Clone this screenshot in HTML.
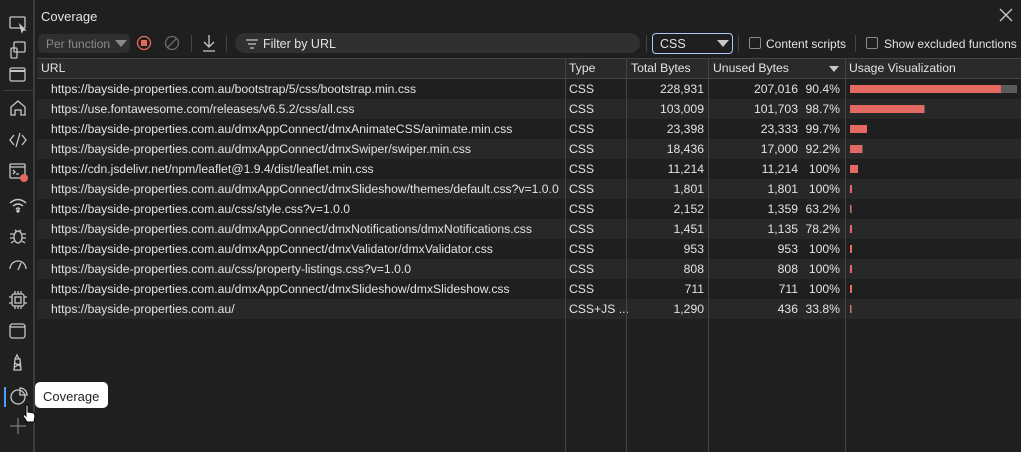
<!DOCTYPE html><html><head><style>
*{box-sizing:border-box;margin:0;padding:0}
body{width:1021px;height:452px;background:#1f1f1f;font-family:"Liberation Sans",sans-serif;font-size:12.2px;color:#e3e3e3;position:relative;overflow:hidden}
.side{position:absolute;left:0;top:0;width:35px;height:452px;background:#202020;border-right:2px solid #3d3d3d}
.side svg{position:absolute;left:8px}
.t{position:absolute;white-space:nowrap}
.grid{position:absolute;left:37px;top:58px;width:984px;bottom:0}
.hdr{height:21px;background:#2a2a2a;border-top:1px solid #444;border-bottom:1px solid #444;position:relative}
.row{height:20px;position:relative}
.c{position:absolute;top:0;height:100%;line-height:20px;white-space:nowrap}
.vl{position:absolute;top:0;bottom:0;width:1px;background:#444}
.bar{position:absolute;top:6px;height:8px;background:#5b5b5b}
.bar i{display:block;height:8px;background:#e46962}
</style></head><body>
<div class="side">
<svg width="20" height="20" style="top:14px" fill="none" stroke="#c7c7c7" stroke-width="1.3"><rect x="2" y="3" width="15" height="11" rx="1"/><path d="M12 11l5 5-2 0 -1 2z" fill="#c7c7c7"/></svg>
<svg width="20" height="20" style="top:40px" fill="none" stroke="#c7c7c7" stroke-width="1.3"><rect x="6" y="2" width="11" height="10" rx="1"/><rect x="3" y="8" width="6" height="10" rx="1"/></svg>
<svg width="20" height="20" style="top:65px" fill="none" stroke="#c7c7c7" stroke-width="1.3"><rect x="2" y="3" width="15" height="13" rx="1.5"/><path d="M2 6h15" stroke-width="2"/></svg>
<div style="position:absolute;left:3px;top:90px;width:30px;height:1px;background:#3d3d3d"></div>
<svg width="20" height="20" style="top:98px" fill="none" stroke="#c7c7c7" stroke-width="1.3"><path d="M3 9l7-6 7 6v8h-4v-5h-6v5h-4z"/></svg>
<svg width="20" height="20" style="top:130px" fill="none" stroke="#c7c7c7" stroke-width="1.3"><path d="M6 5l-4 5 4 5M14 5l4 5-4 5M12 3l-4 14"/></svg>
<svg width="22" height="22" style="top:162px" fill="none" stroke="#c7c7c7" stroke-width="1.3"><rect x="2" y="2" width="15" height="14" rx="1"/><path d="M2 5h15M5 8l2 2-2 2M8 12h3"/><circle cx="16" cy="16" r="4" fill="#e46962" stroke="none"/></svg>
<svg width="20" height="20" style="top:195px" fill="none" stroke="#c7c7c7" stroke-width="1.4"><path d="M2 8q8-7 16 0M5 11q5-4 10 0M8 14q2-2 4 0"/><circle cx="10" cy="16" r="1" fill="#c7c7c7"/></svg>
<svg width="20" height="20" style="top:226px" fill="none" stroke="#c7c7c7" stroke-width="1.3"><ellipse cx="10" cy="11" rx="4" ry="6"/><path d="M7 4l2 2M13 4l-2 2M2 8h4M14 8h4M2 12h4M14 12h4M3 17l3-2M17 17l-3-2"/></svg>
<svg width="20" height="20" style="top:258px" fill="none" stroke="#c7c7c7" stroke-width="1.3"><path d="M2 11a8 8 0 0 1 16 0M10 12l3-7"/></svg>
<svg width="20" height="20" style="top:290px" fill="none" stroke="#c7c7c7" stroke-width="1.3"><rect x="4" y="4" width="12" height="12" rx="2"/><rect x="7" y="7" width="6" height="6"/><path d="M7 1v3M10 1v3M13 1v3M7 16v3M10 16v3M13 16v3M1 7h3M1 13h3M16 7h3M16 13h3"/></svg>
<svg width="20" height="20" style="top:321px" fill="none" stroke="#c7c7c7" stroke-width="1.3"><rect x="2" y="3" width="15" height="14" rx="2.5"/><path d="M2 6h15"/></svg>
<svg width="20" height="20" style="top:352px" fill="none" stroke="#c7c7c7" stroke-width="1.3"><path d="M6 18l1-11h5l1 11zM7 7l2-4 2 4M6.5 11l6 3M7 15l6-4"/></svg>
<div style="position:absolute;left:4px;top:387px;width:2px;height:20px;background:#4a9eff"></div>
<svg width="22" height="22" style="top:386px" fill="none" stroke="#c7c7c7" stroke-width="1.3"><circle cx="10" cy="11" r="7"/><path d="M12 2v7h7a7 7 0 0 0-7-7z"/></svg>
<svg width="20" height="20" style="top:416px" fill="none" stroke="#7a7a7a" stroke-width="1.3"><path d="M10 2v16M2 10h16"/></svg>
</div>
<div class="t" style="left:41px;top:9px;font-size:13px">Coverage</div>
<svg width="14" height="14" style="position:absolute;left:999px;top:8px" stroke="#c7c7c7" stroke-width="1.3"><path d="M1 1l12 12M13 1L1 13"/></svg>
<div style="position:absolute;left:38px;top:34px;width:92px;height:19px;background:#2f2f2f;border-radius:5px"></div>
<div class="t" style="left:46px;top:37px;color:#8a8a8a;font-size:12px">Per function</div>
<svg width="12" height="8" style="position:absolute;left:115px;top:40px"><path d="M0 0h12L6 7z" fill="#8a8a8a"/></svg>
<svg width="16" height="16" style="position:absolute;left:136px;top:35px"><circle cx="8" cy="8" r="6.5" fill="none" stroke="#e46962" stroke-width="1.3"/><rect x="5" y="5" width="6" height="6" fill="#e46962"/></svg>
<svg width="16" height="16" style="position:absolute;left:164px;top:35px" fill="none" stroke="#6b6b6b" stroke-width="1.3"><circle cx="8" cy="8" r="6.5"/><path d="M3.5 12.5l9-9"/></svg>
<div style="position:absolute;left:191px;top:35px;width:1px;height:17px;background:#444"></div>
<svg width="16" height="18" style="position:absolute;left:201px;top:34px" fill="none" stroke="#c7c7c7" stroke-width="1.3"><path d="M8 1v12M3 8l5 5 5-5M2 17h12"/></svg>
<div style="position:absolute;left:226px;top:35px;width:1px;height:17px;background:#444"></div>
<div style="position:absolute;left:235px;top:33px;width:405px;height:20px;background:#303030;border-radius:10px"></div>
<svg width="14" height="12" style="position:absolute;left:245px;top:38px" stroke="#c7c7c7" stroke-width="1.3"><path d="M1 2h12M3 6h8M5 10h4"/></svg>
<div class="t" style="left:263px;top:37px;font-size:12.5px">Filter by URL</div>
<div style="position:absolute;left:646px;top:35px;width:1px;height:17px;background:#444"></div>
<div style="position:absolute;left:652px;top:33px;width:81px;height:21px;border:1.5px solid #a8c7fa;border-radius:4px;background:#1f1f1f"></div>
<div class="t" style="left:660px;top:37px;font-size:12.5px">CSS</div>
<svg width="12" height="8" style="position:absolute;left:717px;top:40px"><path d="M0 0h12L6 7z" fill="#c7c7c7"/></svg>
<div style="position:absolute;left:738px;top:35px;width:1px;height:17px;background:#444"></div>
<div style="position:absolute;left:749px;top:37px;width:12px;height:12px;border:1.3px solid #8a8a8a;border-radius:2px"></div>
<div class="t" style="left:766px;top:37px;font-size:12px">Content scripts</div>
<div style="position:absolute;left:855px;top:35px;width:1px;height:17px;background:#444"></div>
<div style="position:absolute;left:866px;top:37px;width:12px;height:12px;border:1.3px solid #8a8a8a;border-radius:2px"></div>
<div class="t" style="left:884px;top:37px;font-size:12px">Show excluded functions</div>
<div class="grid">
<div class="hdr"><div class="c" style="left:4px;line-height:19px">URL</div><div class="c" style="left:532px;line-height:19px">Type</div><div class="c" style="left:594px;line-height:19px">Total Bytes</div><div class="c" style="left:676px;line-height:19px">Unused Bytes</div><svg width="10" height="7" style="position:absolute;left:792px;top:7px"><path d="M0 0h10L5 6z" fill="#c7c7c7"/></svg><div class="c" style="left:812px;line-height:19px">Usage Visualization</div></div>
<div id="rows"></div>
<div class="vl" style="left:528px"></div><div class="vl" style="left:589px"></div><div class="vl" style="left:671px"></div><div class="vl" style="left:808px"></div>
</div>
<script>
var d=[["https://bayside-properties.com.au/bootstrap/5/css/bootstrap.min.css","CSS",228931,207016,"90.4%"],
["https://use.fontawesome.com/releases/v6.5.2/css/all.css","CSS",103009,101703,"98.7%"],
["https://bayside-properties.com.au/dmxAppConnect/dmxAnimateCSS/animate.min.css","CSS",23398,23333,"99.7%"],
["https://bayside-properties.com.au/dmxAppConnect/dmxSwiper/swiper.min.css","CSS",18436,17000,"92.2%"],
["https://cdn.jsdelivr.net/npm/leaflet@1.9.4/dist/leaflet.min.css","CSS",11214,11214,"100%"],
["https://bayside-properties.com.au/dmxAppConnect/dmxSlideshow/themes/default.css?v=1.0.0","CSS",1801,1801,"100%"],
["https://bayside-properties.com.au/css/style.css?v=1.0.0","CSS",2152,1359,"63.2%"],
["https://bayside-properties.com.au/dmxAppConnect/dmxNotifications/dmxNotifications.css","CSS",1451,1135,"78.2%"],
["https://bayside-properties.com.au/dmxAppConnect/dmxValidator/dmxValidator.css","CSS",953,953,"100%"],
["https://bayside-properties.com.au/css/property-listings.css?v=1.0.0","CSS",808,808,"100%"],
["https://bayside-properties.com.au/dmxAppConnect/dmxSlideshow/dmxSlideshow.css","CSS",711,711,"100%"],
["https://bayside-properties.com.au/","CSS+JS ...",1290,436,"33.8%"]];
var h="";d.forEach(function(r,i){var w=Math.max(2,r[2]/228931*167),u=r[3]/r[2]*w;
h+='<div class="row" style="background:'+(i%2?'#282828':'#1f1f1f')+'"><div class="c" style="left:14px">'+r[0]+'</div><div class="c" style="left:532px">'+r[1]+'</div><div class="c" style="right:317px">'+r[2].toLocaleString("en-US")+'</div><div class="c" style="right:223px">'+r[3].toLocaleString("en-US")+'</div><div class="c" style="right:181px">'+r[4]+'</div><div class="bar" style="left:813px;width:'+w+'px"><i style="width:'+u+'px"></i></div></div>'});
document.getElementById("rows").innerHTML=h;
</script>
<div style="position:absolute;left:35px;top:382px;width:73px;height:26px;background:#fff;border-radius:5px"></div>
<div class="t" style="left:43px;top:389px;color:#1f1f1f;font-size:13px">Coverage</div>
<svg width="14" height="20" style="position:absolute;left:22px;top:404px"><path d="M4 1v11l-2-2-1 2 4 6h7l1-6-1-3-6-1V1z" fill="#fff" stroke="#000" stroke-width="1"/></svg>
</body></html>
